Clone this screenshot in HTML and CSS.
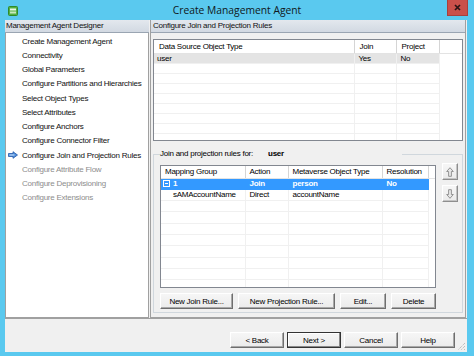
FILE: index.html
```html
<!DOCTYPE html>
<html lang="en">
<head>
  <meta charset="UTF-8" />
  <title>Create Management Agent</title>
  <link rel="stylesheet" href="styles.css">
</head>
<body>
  <div class="window">

    <!-- Title bar -->
    <div class="titlebar">
      <svg class="app-icon" width="10" height="10" viewBox="0 0 10 10">
        <rect x="0.5" y="0.5" width="9" height="9" rx="1" fill="#52b043" stroke="#2f8a2a" />
        <rect x="2" y="2.5" width="6" height="2" fill="#e9f5e4" />
        <rect x="2" y="5.5" width="6" height="2" fill="#c9e8c0" />
      </svg>
      <span class="title">Create Management Agent</span>
      <span class="close">
        <svg width="7" height="7" viewBox="0 0 7 7">
          <path d="M1 1 L6 6 M6 1 L1 6" stroke="#2a1414" stroke-width="1.7" />
        </svg>
      </span>
    </div>

    <div class="client">
      <div class="panes">

        <!-- Designer steps -->
        <aside class="designer">
          <div class="pane-head">Management Agent Designer</div>
          <ul class="steps">
            <li><span class="mark"></span>Create Management Agent</li>
            <li><span class="mark"></span>Connectivity</li>
            <li><span class="mark"></span>Global Parameters</li>
            <li><span class="mark"></span>Configure Partitions and Hierarchies</li>
            <li><span class="mark"></span>Select Object Types</li>
            <li><span class="mark"></span>Select Attributes</li>
            <li><span class="mark"></span>Configure Anchors</li>
            <li><span class="mark"></span>Configure Connector Filter</li>
            <li class="current">
              <span class="mark">
                <svg width="10" height="8" viewBox="0 0 10 8">
                  <path d="M0.5 2.5 H5 V0.7 L9.5 4 L5 7.3 V5.5 H0.5 Z" fill="#4f8fdc" stroke="#2358a8" stroke-width="0.8" />
                  <path d="M1.5 4 H6.5" stroke="#cfe2fa" stroke-width="1" />
                </svg>
              </span>Configure Join and Projection Rules
            </li>
            <li class="off"><span class="mark"></span>Configure Attribute Flow</li>
            <li class="off"><span class="mark"></span>Configure Deprovisioning</li>
            <li class="off"><span class="mark"></span>Configure Extensions</li>
          </ul>
        </aside>

        <!-- Page -->
        <main class="page">
          <div class="pane-head">Configure Join and Projection Rules</div>
          <div class="page-body">

            <div class="listview types">
              <table class="grid">
                <colgroup>
                  <col style="width:200px"><col style="width:42px"><col style="width:43px"><col>
                </colgroup>
                <tr><th>Data Source Object Type</th><th>Join</th><th>Project</th><th></th></tr>
                <tr class="inactive-sel"><td class="first">user</td><td>Yes</td><td>No</td><td class="filler"></td></tr>
                <tr><td></td><td></td><td></td><td class="filler"></td></tr>
                <tr><td></td><td></td><td></td><td class="filler"></td></tr>
                <tr><td></td><td></td><td></td><td class="filler"></td></tr>
                <tr><td></td><td></td><td></td><td class="filler"></td></tr>
                <tr><td></td><td></td><td></td><td class="filler"></td></tr>
                <tr><td></td><td></td><td></td><td class="filler"></td></tr>
                <tr><td></td><td></td><td></td><td class="filler"></td></tr>
                <tr><td></td><td></td><td></td><td class="filler"></td></tr>
              </table>
            </div>

            <fieldset class="rules">
              <legend>Join and projection rules for:<b class="obj">user</b></legend>

              <div class="rules-row">
                <div class="listview rule-list">
                  <table class="grid">
                    <colgroup>
                      <col style="width:84px"><col style="width:43px"><col style="width:94px"><col style="width:46px"><col>
                    </colgroup>
                    <tr><th>Mapping Group</th><th>Action</th><th>Metaverse Object Type</th><th>Resolution</th><th></th></tr>
                    <tr class="selected">
                      <td class="group">
                        <svg class="expander" width="7" height="7" viewBox="0 0 7 7">
                          <rect x="0.5" y="0.5" width="6" height="6" fill="none" stroke="#fff" />
                          <path d="M2 3.5 H5" stroke="#fff" />
                        </svg>1
                      </td>
                      <td>Join</td><td>person</td><td>No</td><td class="filler"></td>
                    </tr>
                    <tr><td class="attr">sAMAccountName</td><td>Direct</td><td>accountName</td><td></td><td class="filler"></td></tr>
                    <tr><td></td><td></td><td></td><td></td><td class="filler"></td></tr>
                    <tr><td></td><td></td><td></td><td></td><td class="filler"></td></tr>
                    <tr><td></td><td></td><td></td><td></td><td class="filler"></td></tr>
                    <tr><td></td><td></td><td></td><td></td><td class="filler"></td></tr>
                    <tr><td></td><td></td><td></td><td></td><td class="filler"></td></tr>
                    <tr><td></td><td></td><td></td><td></td><td class="filler"></td></tr>
                    <tr><td></td><td></td><td></td><td></td><td class="filler"></td></tr>
                    <tr><td></td><td></td><td></td><td></td><td class="filler"></td></tr>
                  </table>
                </div>

                <div class="movers">
                  <button class="btn mover">
                    <svg width="8" height="10" viewBox="0 0 8 10">
                      <path d="M4 0.7 L7.3 4.5 H5.4 V9.3 H2.6 V4.5 H0.7 Z" fill="#e8e8e8" stroke="#8a8a8a" stroke-width="0.9" />
                    </svg>
                  </button>
                  <button class="btn mover">
                    <svg width="8" height="10" viewBox="0 0 8 10">
                      <path d="M4 9.3 L7.3 5.5 H5.4 V0.7 H2.6 V5.5 H0.7 Z" fill="#e8e8e8" stroke="#8a8a8a" stroke-width="0.9" />
                    </svg>
                  </button>
                </div>
              </div>

              <div class="actions">
                <button class="btn w-join">New Join Rule...</button>
                <button class="btn w-proj">New Projection Rule...</button>
                <button class="btn w-edit">Edit...</button>
                <button class="btn w-del">Delete</button>
              </div>
            </fieldset>

          </div>
        </main>
      </div>

      <!-- Wizard buttons -->
      <div class="footer">
        <button class="btn nav">&lt; Back</button>
        <button class="btn nav default">Next &gt;</button>
        <button class="btn nav">Cancel</button>
        <button class="btn nav">Help</button>
        <svg class="grip" width="9" height="9" viewBox="0 0 9 9">
          <path d="M8 1 L1 8 M8 4 L4 8 M8 7 L7 8" stroke="#a8a8a8" stroke-width="1" stroke-dasharray="1 1" />
        </svg>
      </div>
    </div>

  </div>
</body>
</html>
```

FILE: styles.css
```css
:root {
  --frame: #5ac9ef;
  --face: #f0f0f0;
  --edge: #a0a0a0;
  --grid-line: #f0f0f0;
  --select: #3399ff;
  --disabled: #8d8d8d;
}

* {
  margin: 0;
  padding: 0;
  box-sizing: border-box;
}

body {
  width: 474px;
  height: 356px;
  overflow: hidden;
  background: var(--frame);
  font-family: 'Liberation Sans', Arial, sans-serif;
  font-size: 8px;
  letter-spacing: -0.25px;
  color: #000;
}

.window {
  display: flex;
  flex-direction: column;
  height: 356px;
}

/* Title bar */
.titlebar {
  height: 20px;
  display: grid;
  grid-template-columns: 1fr auto 1fr;
  align-items: start;
}

.app-icon {
  margin: 6px 0 0 8px;
}

.title {
  font-family: 'Open Sans', sans-serif;
  font-size: 10.3px;
  letter-spacing: 0;
  line-height: 20px;
  color: #101820;
}

.close {
  justify-self: end;
  margin-right: 6px;
  width: 21px;
  height: 16px;
  background: #c9504a;
  border: 1px solid #a8403c;
  border-top: none;
  display: flex;
  align-items: center;
  justify-content: center;
}

/* Client area */
.client {
  flex: 1;
  margin: 0 7px 4px 5px;
  background: var(--face);
  display: flex;
  flex-direction: column;
}

.panes {
  height: 298px;
  display: flex;
}

.pane-head {
  height: 13px;
  line-height: 12px;
  padding-left: 2px;
  background: linear-gradient(#e3e8ee, #d2d9e2);
  border-bottom: 1px solid #9aa5b2;
  color: #111;
}

.designer {
  width: 144px;
  display: flex;
  flex-direction: column;
}

.designer .pane-head {
  padding-left: 1px;
}

.steps {
  flex: 1;
  list-style: none;
  background: #fff;
  border: 1px solid var(--edge);
  border-top: none;
  padding-top: 1px;
}

.steps li {
  display: flex;
  align-items: center;
  height: 14.25px;
  white-space: nowrap;
  color: #111;
}

.steps li.off {
  color: var(--disabled);
}

.mark {
  width: 16px;
  display: flex;
  align-items: center;
  padding-left: 2px;
}

.page {
  flex: 1;
  margin: 0 1px 0 1px;
  border: 1px solid var(--edge);
  border-top: none;
  display: flex;
  flex-direction: column;
}

.page-body {
  flex: 1;
  padding: 6px 2px 3px 2px;
}

/* List views */
.listview {
  background: #fff;
  border: 1px solid #828790;
  overflow: hidden;
}

.types {
  height: 102px;
}

.grid {
  width: 100%;
  table-layout: fixed;
  border-collapse: collapse;
}

.grid th {
  height: 13px;
  font-weight: normal;
  text-align: left;
  padding-left: 5px;
  border-right: 1px solid #d5d5d5;
  border-bottom: 1px solid #e3e3e3;
  white-space: nowrap;
  overflow: hidden;
}

.grid th:last-child {
  border-right: none;
}

.grid td {
  height: 10px;
  line-height: 9px;
  padding-left: 4px;
  border-right: 1px solid var(--grid-line);
  border-bottom: 1px solid var(--grid-line);
  white-space: nowrap;
  overflow: hidden;
}

.grid td.filler {
  border-right: none;
  border-bottom: none;
}

.types td.first {
  padding-left: 3px;
}

.inactive-sel td {
  background: #e4e4e4;
}

.inactive-sel td.filler {
  background: #fff;
}

/* Rule group */
.rules {
  margin-top: 8px;
  border: 1px solid #d0d7dd;
  padding: 0 3px 3px 6px;
}

.rules legend {
  width: 242px;
  height: 10px;
  line-height: 10px;
}

.obj {
  margin-left: 15px;
}

.rules-row {
  display: flex;
  gap: 6px;
  margin-top: 6px;
}

.rule-list {
  width: 276px;
  height: 123px;
}

.rule-list th {
  height: 12px;
  padding-left: 4px;
}

.rule-list td {
  height: 11.3px;
  line-height: 10px;
}

.selected td {
  background: var(--select);
  color: #fff;
  font-weight: bold;
  border-color: var(--select);
}

.selected td.filler {
  background: #fff;
}

.rule-list td.group {
  padding-left: 2px;
}

.expander {
  margin-right: 3px;
  vertical-align: -1px;
}

.rule-list td.attr {
  padding-left: 12px;
}

.movers {
  display: flex;
  flex-direction: column;
  gap: 5px;
  margin-top: -2px;
}

/* Buttons */
.btn {
  font: inherit;
  letter-spacing: inherit;
  color: #000;
  height: 16px;
  background: linear-gradient(#f6f6f6, #ebebeb);
  border: 1px solid;
  border-color: #fff #6e6e6e #6e6e6e #fff;
  box-shadow: inset -1px -1px #a8a8a8;
}

.btn.mover {
  width: 16px;
  height: 17px;
  display: flex;
  align-items: center;
  justify-content: center;
  border-color: #fff #8e8e8e #8e8e8e #fff;
  box-shadow: inset -1px -1px #c4c4c4;
}

.actions {
  display: flex;
  gap: 5px;
  margin-top: 5px;
}

.w-join { width: 73px; }
.w-proj { width: 97px; }
.w-edit { width: 46px; }
.w-del { width: 45px; }

.footer {
  flex: 1;
  position: relative;
  border-top: 1px solid var(--edge);
  display: flex;
  justify-content: flex-end;
  align-items: flex-start;
  gap: 3px;
  padding: 13px 12px 0 0;
}

.btn.nav {
  width: 54px;
}

.btn.default {
  border-color: #333;
  box-shadow: inset -1px -1px #888, inset 1px 1px #fff;
}

.grip {
  position: absolute;
  right: 1px;
  bottom: 1px;
}
```
